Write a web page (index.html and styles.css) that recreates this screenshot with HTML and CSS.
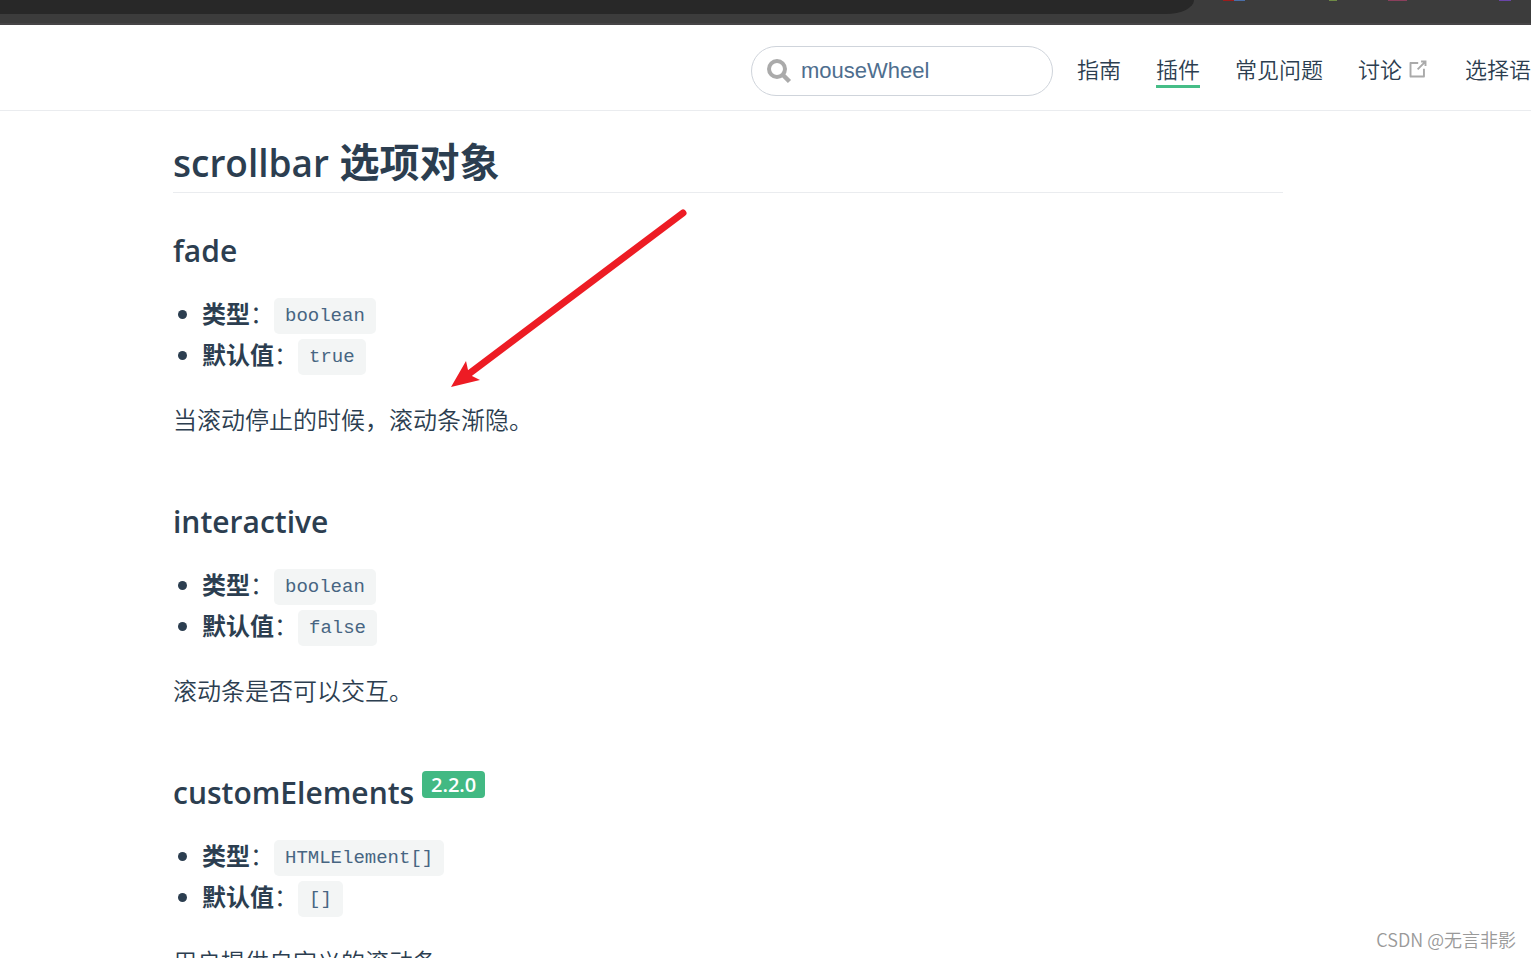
FILE: index.html
```
<!DOCTYPE html>
<html lang="zh-CN">
<head>
    <meta charset="UTF-8">
    <meta name="viewport" content="width=device-width, initial-scale=1.0">
    <title>scrollbar 选项对象</title>
    <link rel="stylesheet" href="styles.css">
</head>
<body>
    <div class="browser-bar">
        <div class="address"></div>
        <div class="extensions">
            <i class="ext ext-red"></i>
            <i class="ext ext-green"></i>
            <i class="ext ext-pink"></i>
            <i class="ext ext-purple"></i>
        </div>
    </div>

    <header class="navbar">
        <label class="search">
            <svg class="search-icon" viewBox="0 0 26 26" aria-hidden="true">
                <circle cx="11" cy="11" r="8" fill="none" stroke="#aaa" stroke-width="4"/>
                <path d="M16.5 16.5L23.5 23.5" stroke="#aaa" stroke-width="4.5"/>
            </svg>
            <input type="text" aria-label="Search" value="mouseWheel">
        </label>
        <nav class="links">
            <a href="#">指南</a>
            <a href="#" class="active">插件</a>
            <a href="#">常见问题</a>
            <a href="#" class="outbound">讨论
                <svg viewBox="0 0 100 100" aria-hidden="true">
                    <path fill="#aaa" d="M18.8,85.1h56l0,0c2.2,0,4-1.8,4-4v-32h-8v28h-48v-48h28v-8h-32l0,0c-2.2,0-4,1.8-4,4v56C14.8,83.3,16.6,85.1,18.8,85.1z"/>
                    <path fill="#aaa" d="M45.7 48.7L51.3 54.3 77.2 28.5 77.2 37.2 85.2 37.2 85.2 14.9 62.8 14.9 62.8 22.9 71.5 22.9z"/>
                </svg>
            </a>
            <a href="#">选择语</a>
        </nav>
    </header>

    <main class="content">
        <h2><span class="latin">scrollbar</span> 选项对象</h2>

        <section>
            <h3>fade</h3>
            <ul>
                <li><strong>类型</strong>：<code>boolean</code></li>
                <li><strong>默认值</strong>：<code>true</code></li>
            </ul>
            <p>当滚动停止的时候，滚动条渐隐。</p>
        </section>

        <section>
            <h3>interactive</h3>
            <ul>
                <li><strong>类型</strong>：<code>boolean</code></li>
                <li><strong>默认值</strong>：<code>false</code></li>
            </ul>
            <p>滚动条是否可以交互。</p>
        </section>

        <section>
            <h3>customElements <span class="badge">2.2.0</span></h3>
            <ul>
                <li><strong>类型</strong>：<code>HTMLElement[]</code></li>
                <li><strong>默认值</strong>：<code>[]</code></li>
            </ul>
            <p>用户提供自定义的滚动条。</p>
        </section>
    </main>

    <svg class="arrow" viewBox="0 0 240 180" aria-hidden="true">
        <path d="M233 4L20 164" stroke="#ed1c24" stroke-width="7" stroke-linecap="round"/>
        <path d="M1 178L16 152L18 161L22 167L30 171Z" fill="#ed1c24"/>
    </svg>
    <div class="watermark">CSDN @无言非影</div>
</body>
</html>
```
FILE: styles.css
```
* {
    box-sizing: border-box;
}
body {
    margin: 0;
    height: 100vh;
    overflow: hidden;
    background-color: #fff;
    color: #2c3e50;
    font-family: "Open Sans", "Noto Sans CJK SC", sans-serif;
    font-size: 24px;
}
.browser-bar {
    display: flex;
    height: 25px;
    background-color: #3c3c3c;
    border-bottom: 2px solid #464446;
}
.address {
    width: 78%;
    height: 14px;
    background-color: #282828;
    border-bottom-right-radius: 28px 14px;
}
.extensions {
    display: flex;
    flex: 1;
    justify-content: space-between;
    padding: 0 20px 0 29px;
}
.ext {
    width: 12px;
    height: 1px;
}
.ext-red {
    width: 22px;
    background: linear-gradient(90deg, #9c1c1c 50%, #4a6ea8 50%);
}
.ext-green {
    width: 8px;
    margin-left: 32px;
    background-color: #6f8a45;
}
.ext-pink {
    width: 19px;
    margin-right: 40px;
    background-color: #8a3f5c;
}
.ext-purple {
    background-color: #6a45a8;
}
.navbar {
    display: flex;
    align-items: center;
    justify-content: flex-end;
    height: 86px;
    padding-bottom: 7px;
    padding-top: 14px;
    border-bottom: 1px solid #eaecef;
}
.search {
    display: flex;
    align-items: center;
    width: 302px;
    height: 50px;
    margin-right: 24px;
    padding-left: 14px;
    border: 1px solid #cfd4db;
    border-radius: 25px;
}
.search-icon {
    width: 26px;
    height: 26px;
    margin-right: 9px;
}
.search input {
    flex: 1;
    min-width: 0;
    padding: 0;
    border: none;
    outline: none;
    background: none;
    color: #4e6e8e;
    font-family: "Liberation Sans", sans-serif;
    font-size: 22px;
}
.links {
    display: flex;
    gap: 35px;
    flex-shrink: 0;
}
.links a {
    height: 34px;
    line-height: 30px;
    font-size: 22px;
    font-weight: 350;
    color: #2c3e50;
    text-decoration: none;
    white-space: nowrap;
}
.links .active {
    border-bottom: 3px solid #46bd87;
}
.links .outbound {
    display: flex;
    align-items: center;
    height: 30px;
}
.outbound svg {
    width: 24px;
    height: 24px;
    margin-left: 4px;
}
.content {
    max-width: 1283px;
    padding: 27px 0 0 173px;
}
h2 {
    margin: 0 0 36px;
    padding-bottom: 6px;
    border-bottom: 1px solid #eaecef;
    font-size: 40px;
    line-height: 48px;
    font-weight: 600;
}
.latin {
    font-size: 37px;
    line-height: 1;
}
h3 {
    margin: 0 0 20px;
    font-size: 30px;
    line-height: 44px;
    font-weight: 600;
}
section {
    margin-bottom: 60px;
}
ul {
    margin: 0 0 24px;
    padding-left: 29px;
}
li {
    height: 41px;
    line-height: 41px;
    font-weight: 350;
}
strong {
    font-weight: 700;
}
code {
    display: inline-block;
    height: 36px;
    margin-top: 5px;
    padding: 0 11px;
    border-radius: 5px;
    background-color: #f3f5f5;
    color: #476582;
    font-family: "Liberation Mono", monospace;
    font-size: 19px;
    font-weight: 400;
    line-height: 36px;
    vertical-align: top;
}
p {
    margin: 0;
    line-height: 41px;
    font-weight: 350;
}
.badge {
    display: inline-block;
    height: 27px;
    padding: 0 9px;
    border-radius: 4px;
    background-color: #42b983;
    color: #fff;
    font-size: 20px;
    line-height: 28px;
    vertical-align: top;
}
.arrow {
    position: absolute;
    left: 450px;
    top: 209px;
    width: 240px;
    height: 180px;
}
.watermark {
    position: absolute;
    right: 15px;
    bottom: 6px;
    color: #999;
    font-family: "Noto Sans CJK SC", sans-serif;
    font-size: 18px;
    font-weight: 350;
}
```
